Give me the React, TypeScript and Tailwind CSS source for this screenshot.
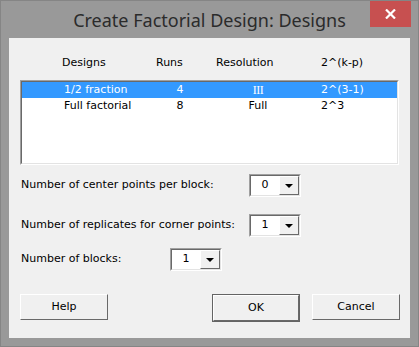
import React from "react";

const rows = [
  { design: "1/2 fraction", runs: "4", res: "III", kp: "2^(3-1)", selected: true },
  { design: "Full factorial", runs: "8", res: "Full", kp: "2^3", selected: false },
];

function Combo({ value }: { value: string }) {
  return (
    <div className="w-[52px] h-[23px] border border-t-[#a0a0a0] border-l-[#a0a0a0] border-r-white border-b-white">
      <div className="h-full flex bg-white border border-t-[#696969] border-l-[#696969] border-r-[#e3e3e3] border-b-[#e3e3e3]">
        <div className="flex-1 flex items-center justify-center text-black">{value}</div>
        <div className="w-[20px] h-full flex items-center justify-center bg-[#f0f0f0] border border-t-white border-l-white border-r-[#696969] border-b-[#696969]">
          <div className="w-0 h-0 border-l-[4px] border-r-[4px] border-t-[4px] border-l-transparent border-r-transparent border-t-black" />
        </div>
      </div>
    </div>
  );
}

function Btn({ label, def = false }: { label: string; def?: boolean }) {
  return (
    <div className={"w-[88px] h-[28px] border " + (def ? "border-[#646464]" : "border-transparent")}>
      <div
        className={
          "h-full flex items-center justify-center bg-[#f0f0f0] border border-t-white border-l-white border-r-[#696969] border-b-[#696969] " +
          (def ? "" : "-m-px h-[28px]")
        }
      >
        {label}
      </div>
    </div>
  );
}

export default function App() {
  return (
    <div
      className="w-[419px] h-[347px] bg-[#999999] border border-[#858585] flex flex-col"
      style={{ fontFamily: '"DejaVu Sans", sans-serif' }}
    >
      {/* title bar */}
      <div className="h-[37px] flex items-start">
        <div className="w-[48px]" />
        <div
          className="flex-1 text-center text-[18px] text-[#2b2b2b] pt-[6px]"
          style={{ fontFamily: '"Noto Sans", sans-serif' }}
        >
          Create Factorial Design: Designs
        </div>
        <div className="w-[41px] h-[26px] mr-[7px] bg-[#c75050] flex items-center justify-center">
          <svg width="11" height="10" viewBox="0 0 11 10">
            <path d="M1 0.5 L10 9.5 M10 0.5 L1 9.5" stroke="white" strokeWidth="2.2" />
          </svg>
        </div>
      </div>

      {/* client area */}
      <div className="mx-[8px] w-[401px] h-[300px] bg-[#f0f0f0] text-[11px] text-black flex flex-col">
        <div className="mt-[17px] h-[16px] flex items-center pl-[53px]">
          <span className="w-[94px]">Designs</span>
          <span className="w-[60px]">Runs</span>
          <span className="w-[105px]">Resolution</span>
          <span>2^(k-p)</span>
        </div>

        <div className="mt-[9px] ml-[11px] w-[379px] h-[85px] border border-t-[#a0a0a0] border-l-[#a0a0a0] border-r-white border-b-white">
          <div className="h-full bg-white border border-t-[#696969] border-l-[#696969] border-r-[#e3e3e3] border-b-[#e3e3e3]">
            {rows.map((r) => (
              <div
                key={r.design}
                className={"h-[16px] flex items-center " + (r.selected ? "bg-[#3399ff] text-white" : "text-black")}
              >
                <span className="pl-[42px] w-[142px]">{r.design}</span>
                <span className="w-[32px] text-center">{r.runs}</span>
                <span
                  className={"w-[124px] text-center " + (r.res === "III" ? "text-[12px] tracking-[-0.5px]" : "")}
                  style={r.res === "III" ? { fontFamily: '"Liberation Serif", serif' } : undefined}
                >
                  {r.res}
                </span>
                <span className="pl-[1px]">{r.kp}</span>
              </div>
            ))}
          </div>
        </div>

        <div className="mt-[9px] ml-[12px] flex items-center">
          <span className="w-[228px]">Number of center points per block:</span>
          <Combo value="0" />
        </div>
        <div className="mt-[17px] ml-[12px] flex items-center">
          <span className="w-[228px]">Number of replicates for corner points:</span>
          <Combo value="1" />
        </div>
        <div className="mt-[11px] ml-[12px] flex items-center">
          <span className="w-[149px]">Number of blocks:</span>
          <Combo value="1" />
        </div>

        <div className="mt-[23px] ml-[11px] flex">
          <Btn label="Help" />
          <div className="ml-[104px]">
            <Btn label="OK" def />
          </div>
          <div className="ml-[12px]">
            <Btn label="Cancel" />
          </div>
        </div>
      </div>
    </div>
  );
}
